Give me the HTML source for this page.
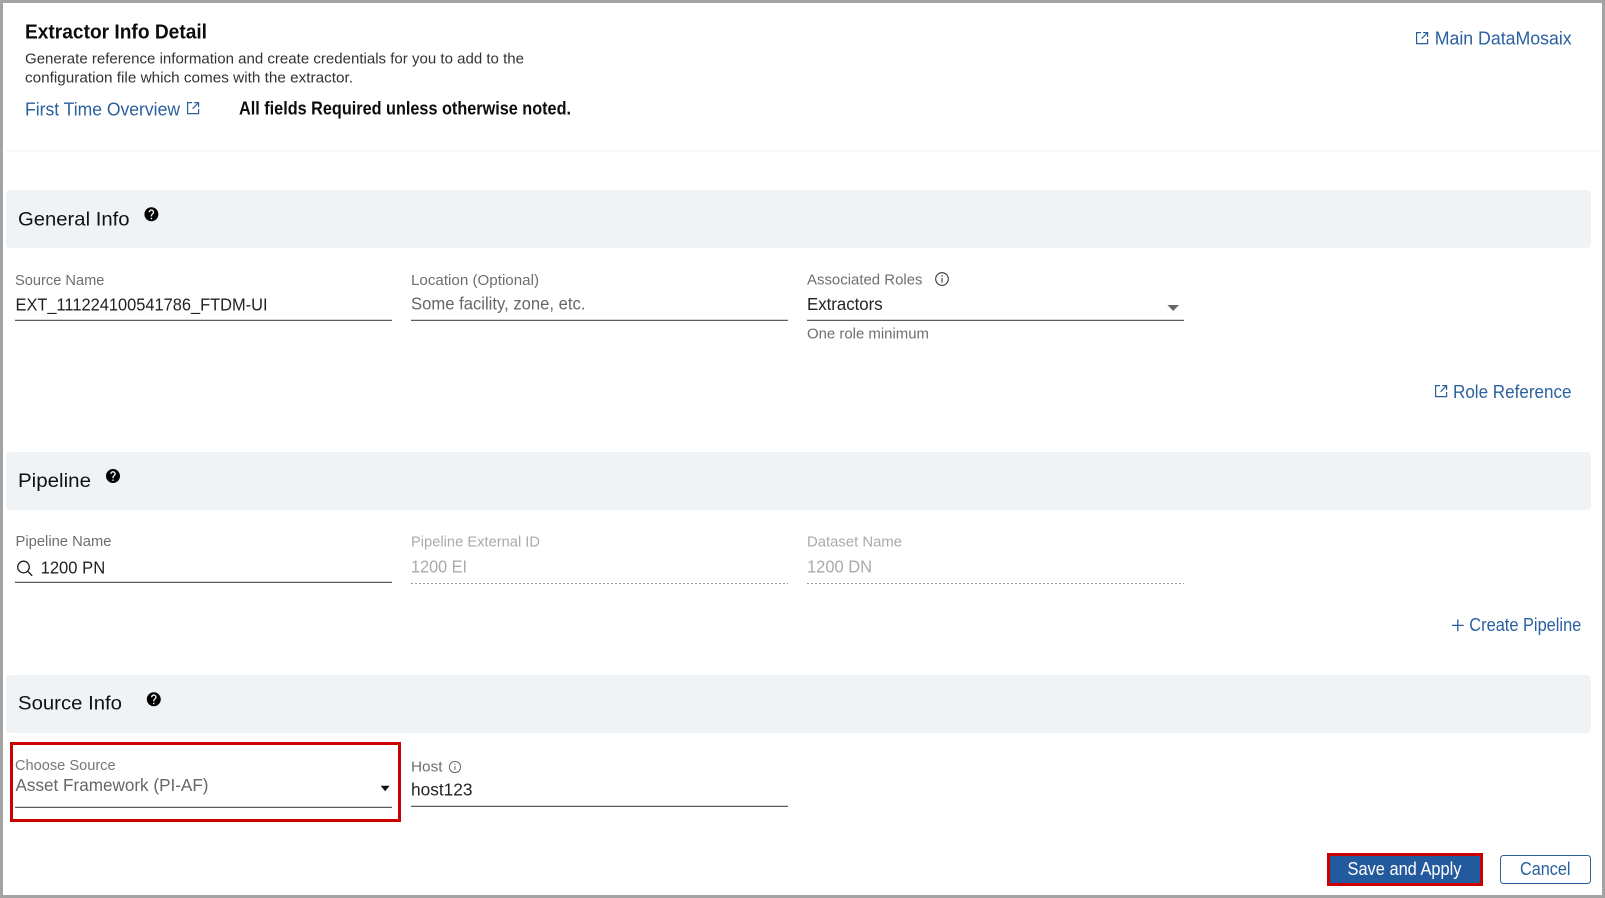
<!DOCTYPE html>
<html lang="en">
<head>
<meta charset="utf-8">
<title>Extractor Info Detail</title>
<style>
html,body{margin:0;padding:0;background:#fff;width:1605px;height:898px;overflow:hidden}
svg{display:block}
text{font-family:"Liberation Sans",Arial,sans-serif}
.ln{fill:#2b609f;font-size:18px}
.lb{fill:#6e6e6e;font-size:14.6px}
.val{fill:#222;font-size:17.2px}
.hd{fill:#111;font-size:19.5px}
.dis{fill:#aaa}
.ul{stroke:#5c5c5c;stroke-width:1.3;fill:none}
.dot{stroke:#999;stroke-width:1;stroke-dasharray:2 2;fill:none}
.ext{stroke:#2b609f;stroke-width:1.2;fill:none}
.inf{stroke:#333;stroke-width:1.1;fill:none}
</style>
</head>
<body>
<svg width="1605" height="898" viewBox="0 0 1605 898" xmlns="http://www.w3.org/2000/svg">
<defs>
<path id="help" d="M12 2C6.48 2 2 6.48 2 12s4.48 10 10 10 10-4.48 10-10S17.52 2 12 2zm1 17h-2v-2h2v2zm2.07-7.75l-.9.92C13.45 12.9 13 13.5 13 15h-2v-.5c0-1.1.45-2.1 1.17-2.83l1.24-1.26c.37-.36.59-.86.59-1.41 0-1.1-.9-2-2-2s-2 .9-2 2H8c0-2.21 1.79-4 4-4s4 1.79 4 4c0 .88-.36 1.68-.93 2.25z"/>
<path id="ext" d="M5 .6H.6v11h11V7M7.2.6h4.4V5M11.3 1L5.6 6.7"/>
</defs>
<rect width="1605" height="898" fill="#fff"/>

<!-- Header -->
<text x="25" y="38.3" font-size="20.5" font-weight="700" fill="#0c0c0c" textLength="182" lengthAdjust="spacingAndGlyphs">Extractor Info Detail</text>
<text x="25" y="63.3" font-size="15" fill="#333" textLength="499" lengthAdjust="spacingAndGlyphs">Generate reference information and create credentials for you to add to the</text>
<text x="25" y="82.3" font-size="15" fill="#333" textLength="328" lengthAdjust="spacingAndGlyphs">configuration file which comes with the extractor.</text>
<text x="25" y="115.3" class="ln" textLength="155" lengthAdjust="spacingAndGlyphs">First Time Overview</text>
<use href="#ext" x="187" y="102" class="ext"/>
<text x="239" y="114.6" font-size="18" font-weight="700" fill="#0c0c0c" textLength="332" lengthAdjust="spacingAndGlyphs">All fields Required unless otherwise noted.</text>
<use href="#ext" x="1416" y="32" class="ext"/>
<text x="1434.7" y="44.3" class="ln" textLength="137" lengthAdjust="spacingAndGlyphs">Main DataMosaix</text>
<rect x="6" y="150" width="1594" height="2" fill="#f8f8f8"/>

<!-- General Info -->
<rect x="6" y="190" width="1585" height="58" rx="4" fill="#eff3f6"/>
<text x="18" y="225.3" class="hd" textLength="111.5" lengthAdjust="spacingAndGlyphs">General Info</text>
<use href="#help" transform="translate(143 205.9) scale(.7)" fill="#000"/>

<text x="15" y="285" class="lb" textLength="89.4" lengthAdjust="spacingAndGlyphs">Source Name</text>
<text x="15.5" y="310.3" class="val" textLength="252" lengthAdjust="spacingAndGlyphs">EXT_111224100541786_FTDM-UI</text>
<path class="ul" d="M15 320.4H392"/>

<text x="411" y="285" class="lb" textLength="128" lengthAdjust="spacingAndGlyphs">Location (Optional)</text>
<text x="411" y="309.5" class="val" style="fill:#666" textLength="174.5" lengthAdjust="spacingAndGlyphs">Some facility, zone, etc.</text>
<path class="ul" d="M411 320.4H788"/>

<text x="807" y="284.3" class="lb" textLength="115.5" lengthAdjust="spacingAndGlyphs">Associated Roles</text>
<circle cx="942" cy="279" r="6.3" class="inf"/>
<path class="inf" d="M942 278v4.6M942 275.2v1.4"/>
<text x="807" y="310" class="val" textLength="75.6" lengthAdjust="spacingAndGlyphs">Extractors</text>
<path d="M1167.4 305H1179L1173.2 311Z" fill="#666"/>
<path class="ul" d="M807 320.4H1184"/>
<text x="807" y="338.3" class="lb" textLength="122" lengthAdjust="spacingAndGlyphs">One role minimum</text>

<use href="#ext" x="1435" y="385" class="ext"/>
<text x="1453" y="398" class="ln" textLength="118.5" lengthAdjust="spacingAndGlyphs">Role Reference</text>

<!-- Pipeline -->
<rect x="6" y="452" width="1585" height="58" rx="4" fill="#eff3f6"/>
<text x="18" y="487.2" class="hd" textLength="73" lengthAdjust="spacingAndGlyphs">Pipeline</text>
<use href="#help" transform="translate(104.6 467.6) scale(.7)" fill="#000"/>

<text x="15.5" y="546" class="lb" textLength="96" lengthAdjust="spacingAndGlyphs">Pipeline Name</text>
<circle cx="23.5" cy="567" r="5.8" fill="none" stroke="#222" stroke-width="1.3"/>
<path d="M27.7 571.3L32.2 575.7" stroke="#222" stroke-width="1.4" fill="none"/>
<text x="40.6" y="573.3" class="val" textLength="64.6" lengthAdjust="spacingAndGlyphs">1200 PN</text>
<path class="ul" d="M15 582.4H392"/>

<text x="411" y="546.7" class="lb dis" textLength="129" lengthAdjust="spacingAndGlyphs">Pipeline External ID</text>
<text x="411" y="572.7" class="val dis" textLength="56" lengthAdjust="spacingAndGlyphs">1200 EI</text>
<path class="dot" d="M411 583.5H788"/>

<text x="807" y="546.7" class="lb dis" textLength="95" lengthAdjust="spacingAndGlyphs">Dataset Name</text>
<text x="807" y="572.7" class="val dis" textLength="65" lengthAdjust="spacingAndGlyphs">1200 DN</text>
<path class="dot" d="M807 583.5H1184"/>

<path d="M1452 625.4H1463.7M1457.8 619.5V631.3" stroke="#2b609f" stroke-width="1.3" fill="none"/>
<text x="1469.3" y="631" class="ln" textLength="112" lengthAdjust="spacingAndGlyphs">Create Pipeline</text>

<!-- Source Info -->
<rect x="6" y="675" width="1585" height="58" rx="4" fill="#eff3f6"/>
<text x="18" y="709.5" class="hd" textLength="104" lengthAdjust="spacingAndGlyphs">Source Info</text>
<use href="#help" transform="translate(145.4 690.9) scale(.7)" fill="#000"/>

<rect x="11.5" y="743.5" width="388" height="77" fill="none" stroke="#cc0000" stroke-width="3"/>
<text x="15" y="770" class="lb" style="fill:#777" textLength="100.6" lengthAdjust="spacingAndGlyphs">Choose Source</text>
<text x="15.5" y="791" class="val" style="fill:#666" textLength="193" lengthAdjust="spacingAndGlyphs">Asset Framework (PI-AF)</text>
<path d="M380.7 785.7H389.6L385.1 791.2Z" fill="#111"/>
<path class="ul" d="M15 807.4H392"/>

<text x="411" y="771.3" class="lb" textLength="31.5" lengthAdjust="spacingAndGlyphs">Host</text>
<circle cx="455" cy="767" r="5.6" fill="none" stroke="#666" stroke-width="1"/>
<path d="M455 766v4M455 763.6v1.2" stroke="#666" stroke-width="1" fill="none"/>
<text x="411" y="795.3" class="val" textLength="61.5" lengthAdjust="spacingAndGlyphs">host123</text>
<path class="ul" d="M411 806.4H788"/>

<!-- Buttons -->
<rect x="1328.5" y="854.5" width="153" height="30" fill="#235a9e" stroke="#cc0000" stroke-width="3"/>
<text x="1347.5" y="875" font-size="18" fill="#fff" textLength="114" lengthAdjust="spacingAndGlyphs">Save and Apply</text>
<rect x="1500.5" y="855.5" width="90" height="28" rx="3" fill="#fff" stroke="#2b609f" stroke-width="1"/>
<text x="1520" y="875" class="ln" textLength="50.5" lengthAdjust="spacingAndGlyphs">Cancel</text>

<!-- Outer frame -->
<rect x="0" y="0" width="1605" height="3" fill="#a3a3a3"/>
<rect x="0" y="895" width="1605" height="3" fill="#a3a3a3"/>
<rect x="0" y="0" width="3" height="898" fill="#a3a3a3"/>
<rect x="1602" y="0" width="3" height="898" fill="#a3a3a3"/>
</svg>
</body>
</html>
